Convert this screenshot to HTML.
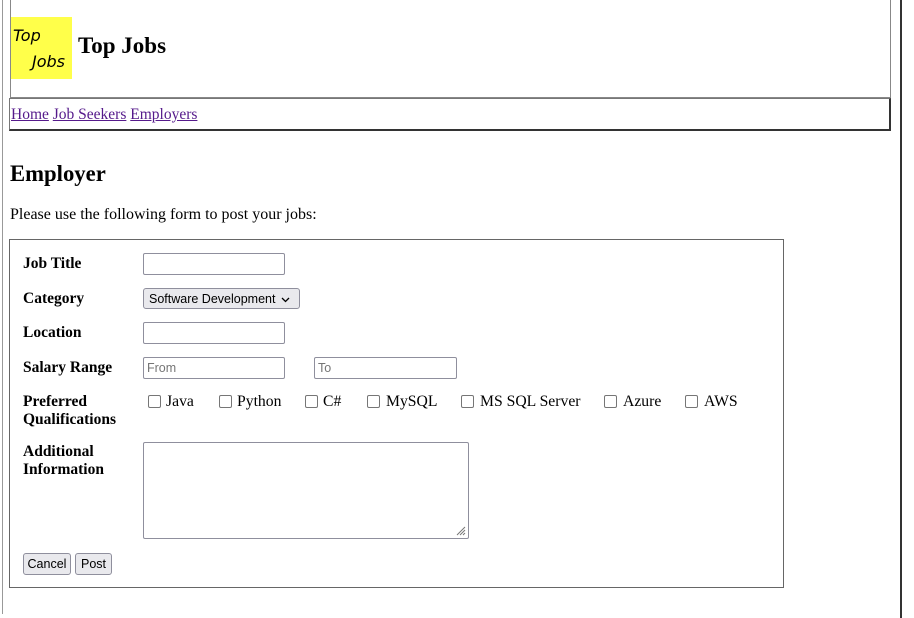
<!DOCTYPE html>
<html><head><meta charset="utf-8"><style>
body{margin:0;width:914px;height:618px;position:relative;background:#fff;font-family:"Liberation Serif",serif;overflow:hidden}
.a{position:absolute}
.lbl{position:absolute;left:23px;font-weight:bold;font-size:15.5px;line-height:18px}
.inp{position:absolute;border:1px solid #8f8f9d;border-radius:2px;background:#fff;box-sizing:border-box;font-family:"Liberation Sans",sans-serif;font-size:12.5px;color:#757575;padding-left:3px;line-height:20px}
.cb{position:absolute;top:395px;width:11px;height:11px;border:1px solid #767676;border-radius:2px}
.ct{position:absolute;top:393px;font-size:15.7px;line-height:18px}
.btn{position:absolute;top:553px;height:22px;box-sizing:border-box;border:1px solid #8f8f9d;border-radius:3px;background:#e9e9ed;font-family:"Liberation Sans",sans-serif;font-size:12.5px;line-height:20px;text-align:center}
a{color:#551a8b}
</style></head><body>
<div class="a" style="left:2px;top:0;width:1px;height:614px;background:#999"></div>
<div class="a" style="left:900px;top:0;width:2px;height:618px;background:#333"></div>
<div class="a" style="left:10px;top:-2px;width:879px;height:99px;border:1px solid #888;border-top:none"></div>
<div class="a" style="left:11px;top:17px;width:61px;height:62px;background:#ffff4a;font-family:'DejaVu Sans',sans-serif;font-style:italic;font-size:16px;line-height:18px">
<div style="position:absolute;left:2px;top:10px">Top</div><div style="position:absolute;left:21px;top:36px">Jobs</div></div>
<div class="a" style="left:78px;top:33px;font-size:23px;font-weight:bold;line-height:26px">Top Jobs</div>
<div class="a" style="left:9px;top:98px;width:879px;height:30px;border:1px solid #777;border-right:2px solid #333;border-bottom:2px solid #333"></div>
<div class="a" style="left:11px;top:106px;font-size:15.5px;line-height:18px"><a href="#">Home</a> <a href="#">Job Seekers</a> <a href="#">Employers</a></div>
<div class="a" style="left:10px;top:161px;font-size:22.7px;font-weight:bold;line-height:26px">Employer</div>
<div class="a" style="left:10px;top:206px;font-size:16px;line-height:18px">Please use the following form to post your jobs:</div>
<div class="a" style="left:9px;top:239px;width:773px;height:347px;border:1px solid #666"></div>
<div class="lbl" style="top:255px">Job Title</div>
<div class="inp" style="left:143px;top:253px;width:142px;height:22px"></div>
<div class="lbl" style="top:290px">Category</div>
<div class="inp" style="left:143px;top:288px;width:157px;height:21px;background:#e9e9ed;color:#000;padding-left:5px;border-radius:3px">Software Development <svg width="9" height="6" style="margin-left:2px"><path d="M1 1l3.5 3.5L8 1" stroke="#000" fill="none" stroke-width="1.3"/></svg></div>
<div class="lbl" style="top:324px">Location</div>
<div class="inp" style="left:143px;top:322px;width:142px;height:22px"></div>
<div class="lbl" style="top:359px">Salary Range</div>
<div class="inp" style="left:143px;top:357px;width:142px;height:22px">From</div>
<div class="inp" style="left:314px;top:357px;width:143px;height:22px">To</div>
<div class="lbl" style="top:393px">Preferred<br>Qualifications</div>
<div class="cb" style="left:148px"></div><div class="ct" style="left:166px">Java</div>
<div class="cb" style="left:219px"></div><div class="ct" style="left:237px">Python</div>
<div class="cb" style="left:305px"></div><div class="ct" style="left:323px">C#</div>
<div class="cb" style="left:367px"></div><div class="ct" style="left:386px">MySQL</div>
<div class="cb" style="left:461px"></div><div class="ct" style="left:480px">MS SQL Server</div>
<div class="cb" style="left:604px"></div><div class="ct" style="left:623px">Azure</div>
<div class="cb" style="left:685px"></div><div class="ct" style="left:704px">AWS</div>
<div class="lbl" style="top:443px">Additional<br>Information</div>
<div class="inp" style="left:143px;top:442px;width:326px;height:97px"><svg style="position:absolute;right:2px;bottom:2px" width="10" height="10"><path d="M9 1L1 9M9 4L4 9M9 7L7 9" stroke="#777" stroke-width="1"/></svg></div>
<div class="btn" style="left:23px;width:48px">Cancel</div>
<div class="btn" style="left:75px;width:37px">Post</div>
</body></html>
